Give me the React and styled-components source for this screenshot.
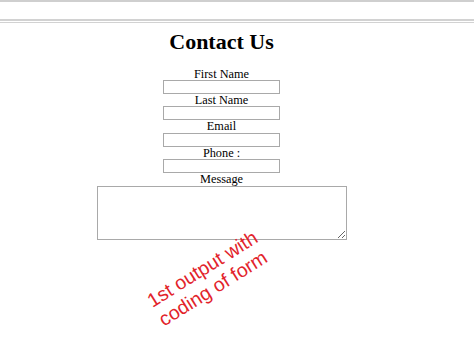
import React from 'react';
import styled, { createGlobalStyle } from 'styled-components';

const Global = createGlobalStyle`
    html, body {
        margin: 0;
        padding: 0;
        background: #ffffff;
    }
    body {
        font-family: "Liberation Serif", "Times New Roman", serif;
        color: #000;
    }
`;

const Page = styled.div`
    position: relative;
    width: 474px;
    height: 362px;
    overflow: hidden;
`;

const TopBar = styled.div`
    height: 17px;
    border-top: 2px solid #cfcfcf;
`;

const DoubleRule = styled.div`
    height: 1px;
    border-top: 2px solid #d2d2d2;
    border-bottom: 1px solid #d2d2d2;
`;

const Content = styled.div`
    width: 443px;
    display: flex;
    flex-direction: column;
    align-items: center;
`;

const Heading = styled.h1`
    margin: 4px 0 0;
    font-size: 22px;
    line-height: 30px;
    font-weight: bold;
`;

const Form = styled.form`
    display: flex;
    flex-direction: column;
    align-items: center;
    margin-top: 11px;
`;

const Label = styled.label`
    font-size: 12.3px;
    line-height: 12.2px;
    display: block;
    text-align: center;
`;

const Input = styled.input`
    box-sizing: border-box;
    width: 117px;
    height: 14px;
    margin: 0;
    padding: 0;
    border: 1px solid #a9a9a9;
    background: #fff;
`;

const TextArea = styled.textarea`
    box-sizing: border-box;
    width: 250px;
    height: 54px;
    margin: 1px 0 0;
    padding: 0;
    border: 1px solid #a9a9a9;
    background: #fff;
`;

const Note = styled.div`
    position: absolute;
    left: 145px;
    top: 256px;
    width: 126px;
    font-family: "Liberation Sans", Arial, sans-serif;
    font-size: 19.5px;
    line-height: 22px;
    color: #e2232b;
    transform: rotate(-32deg);
    transform-origin: center;
    white-space: nowrap;
`;

const fields = ['First Name', 'Last Name', 'Email', 'Phone :'];

export default function App() {
    return (
        <Page>
            <Global />
            <TopBar />
            <DoubleRule />
            <Content>
                <Heading>Contact Us</Heading>
                <Form>
                    {fields.map((f) => (
                        <React.Fragment key={f}>
                            <Label>{f}</Label>
                            <Input type="text" />
                        </React.Fragment>
                    ))}
                    <Label>Message</Label>
                    <TextArea />
                </Form>
            </Content>
            <Note>
                1st output with
                <br />
                coding of form
            </Note>
        </Page>
    );
}
